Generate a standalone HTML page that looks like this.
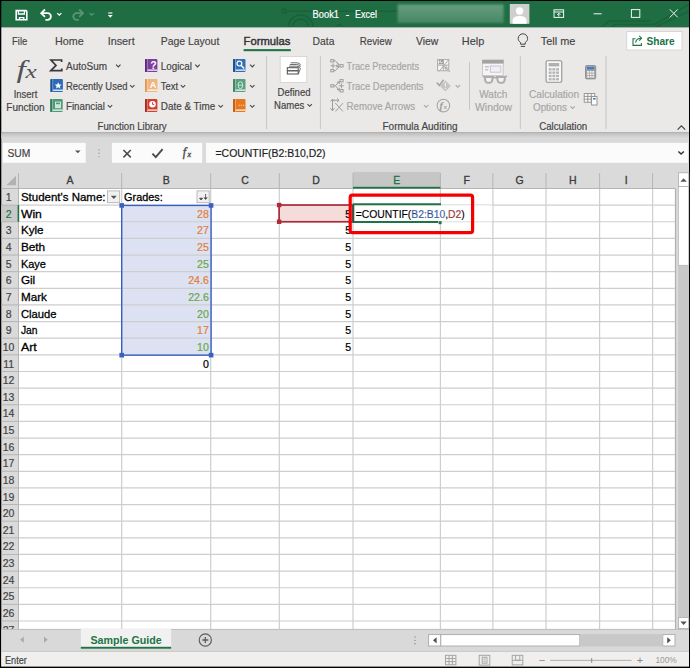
<!DOCTYPE html>
<html lang="en"><head><meta charset="utf-8"><title>Book1 - Excel</title>
<style>
html,body{margin:0;padding:0;background:#000;}
body{width:690px;height:668px;overflow:hidden;font-family:"Liberation Sans", sans-serif;}
svg{display:block;font-family:"Liberation Sans", sans-serif;}
</style></head><body>
<svg width="690" height="668" viewBox="0 0 690 668">
<rect x="0" y="0" width="690" height="668" fill="#000"/>
<rect x="1.3" y="1.0" width="687.7" height="26.4" fill="#1f6d43"/>
<g fill="none" stroke="#1a6039" stroke-width="1.5" opacity="0.9"><circle cx="284.3" cy="11.2" r="2.1"/><path d="M286.400 11.200H400"/><path d="M288.200 27.400a12.400 12.400 0 0 1 24.800 0M292.400 27.400a8.200 8.200 0 0 1 16.400 0"/><circle cx="339.500" cy="26.600" r="2"/><path d="M601 27.400l8-6.400h42M611 27.400l3.600-2.800h40l34-20M655 27.400l34-16"/></g>
<defs><filter id="bl" x="-10%" y="-20%" width="120%" height="140%"><feGaussianBlur stdDeviation="0.8"/></filter><linearGradient id="nm" x1="0" y1="0" x2="0" y2="1"><stop offset="0" stop-color="#6ba184"/><stop offset="1" stop-color="#4a8967"/></linearGradient></defs>
<rect x="397.6" y="4.4" width="106" height="18.6" fill="url(#nm)" filter="url(#bl)" opacity="0.95"/>
<rect x="509.8" y="4" width="19.6" height="19.8" fill="#cfcfcf"/>
<circle cx="519.6" cy="11" r="3.7" fill="#fff"/><path d="M512.6 23.800v-3.200q0-4.600 7-4.600t7 4.600v3.200z" fill="#fff"/>
<text x="312.6" y="17.9" font-size="10.5" fill="#fff" stroke="#fff" stroke-width="0.18" textLength="26.4" lengthAdjust="spacingAndGlyphs">Book1</text>
<text x="345.8" y="17.9" font-size="10.5" fill="#fff" stroke="#fff" stroke-width="0.18">-</text>
<text x="355" y="17.9" font-size="10.5" fill="#fff" stroke="#fff" stroke-width="0.18" textLength="21.9" lengthAdjust="spacingAndGlyphs">Excel</text>
<g fill="none" stroke="#fff" stroke-width="1.6"><path d="M16.200 10.600h9.800l.8.8v8.400h-10.600z"/><path d="M18.400 10.600v3.400h6v-3.400" stroke-width="1.3"/><path d="M19.400 19.800v-2.200h4.400v2.200" stroke-width="1.300"/></g>
<g fill="none" stroke="#fff" stroke-width="1.8"><path d="M41 13.200h6.600a3.300 3.300 0 0 1 0 6.600h-2.200"/><path d="M45 9.500l-3.800 3.700 3.800 3.700"/></g>
<path d="M57.199999999999996 13.149999999999999L59.3 15.25L61.4 13.149999999999999" fill="none" stroke="#fff" stroke-width="1.2"/>
<g fill="none" stroke="#5a9577" stroke-width="1.8"><path d="M83.200 13.200h-6.600a3.300 3.300 0 0 0 0 6.600h2.200"/><path d="M79.200 9.500l3.800 3.700-3.800 3.700"/></g>
<path d="M89.60000000000001 13.149999999999999L91.7 15.25L93.8 13.149999999999999" fill="none" stroke="#5e9a7a" stroke-width="1.2"/>
<path d="M108.200 13h4.200" stroke="#fff" stroke-width="1.100"/><path d="M107.900 15h4.800l-2.400 2.700z" fill="#fff"/>
<g fill="none" stroke="#f2f7f4" stroke-width="1"><rect x="554" y="9.800" width="9.600" height="7.600"/><path d="M554 12h9.600M558.800 16.600v-3.200M557.200 14.800l1.600-1.600 1.600 1.600"/><path d="M593.600 13.800h8"/><rect x="631.400" y="9.600" width="8.400" height="7.800"/><path d="M669.800 9.400l8 8M677.800 9.400l-8 8"/></g>
<rect x="1.3" y="27.3" width="687.7" height="105.3" fill="#ebe9e8"/>
<text x="12" y="44.7" font-size="10.5" fill="#444" stroke="#444" stroke-width="0.15" textLength="15.3" lengthAdjust="spacingAndGlyphs">File</text>
<text x="55" y="44.7" font-size="10.5" fill="#444" stroke="#444" stroke-width="0.15" textLength="28.7" lengthAdjust="spacingAndGlyphs">Home</text>
<text x="107.7" y="44.7" font-size="10.5" fill="#444" stroke="#444" stroke-width="0.15" textLength="27" lengthAdjust="spacingAndGlyphs">Insert</text>
<text x="160.7" y="44.7" font-size="10.5" fill="#444" stroke="#444" stroke-width="0.15" textLength="58.6" lengthAdjust="spacingAndGlyphs">Page Layout</text>
<text x="243.6" y="44.7" font-size="10.5" fill="#333" stroke="#333" stroke-width="0.4" textLength="46.8" lengthAdjust="spacingAndGlyphs">Formulas</text>
<text x="312.6" y="44.7" font-size="10.5" fill="#444" stroke="#444" stroke-width="0.15" textLength="21.9" lengthAdjust="spacingAndGlyphs">Data</text>
<text x="359.7" y="44.7" font-size="10.5" fill="#444" stroke="#444" stroke-width="0.15" textLength="32" lengthAdjust="spacingAndGlyphs">Review</text>
<text x="416" y="44.7" font-size="10.5" fill="#444" stroke="#444" stroke-width="0.15" textLength="22.4" lengthAdjust="spacingAndGlyphs">View</text>
<text x="461.8" y="44.7" font-size="10.5" fill="#444" stroke="#444" stroke-width="0.15" textLength="22.4" lengthAdjust="spacingAndGlyphs">Help</text>
<text x="540.8" y="44.7" font-size="10.5" fill="#444" stroke="#444" stroke-width="0.15" textLength="34.6" lengthAdjust="spacingAndGlyphs">Tell me</text>
<rect x="243.6" y="49.1" width="47.2" height="2.1" fill="#217346"/>
<g fill="none" stroke="#444" stroke-width="1"><path d="M520.6 44.2v-1.6c-1.6-1.2-2.4-2.4-2.4-4.1a4.7 4.7 0 0 1 9.4 0c0 1.7-.8 2.9-2.4 4.1v1.6z"/><path d="M520.8 46.4h4.2"/></g>
<rect x="626.8" y="31.4" width="55.2" height="18.6" fill="#fff" stroke="#d0d0d0" stroke-width="0.8"/>
<g fill="none" stroke="#217346" stroke-width="1.1"><path d="M635.4 38.8h-2.4v6.6h8.4v-2.4"/><path d="M635.6 42.6c.4-3 2.4-4.4 5.6-4.4M639.2 35.8l2.4 2.4-2.4 2.4"/></g>
<text x="646.5" y="44.5" font-size="10.5" fill="#217346" textLength="28.2" lengthAdjust="spacingAndGlyphs" font-weight="bold">Share</text>
<text x="16.6" y="78" font-size="26" fill="#525252" textLength="9.4" lengthAdjust="spacingAndGlyphs" font-style="italic" font-family='"Liberation Serif", serif'>f</text>
<text x="25.4" y="78" font-size="19.5" fill="#525252" textLength="11.2" lengthAdjust="spacingAndGlyphs" font-style="italic" font-family='"Liberation Serif", serif'>x</text>
<text x="13.7" y="97.5" font-size="10" fill="#444444" stroke="#444444" stroke-width="0.18" textLength="23.6" lengthAdjust="spacingAndGlyphs">Insert</text>
<text x="6.3" y="110.7" font-size="10" fill="#444444" stroke="#444444" stroke-width="0.18" textLength="38.3" lengthAdjust="spacingAndGlyphs">Function</text>
<path d="M61.6 62v-2h-10.6l5 5.4-5.2 5.2h11v-2.2" fill="none" stroke="#3a3a3a" stroke-width="1.7" stroke-linejoin="miter"/>
<text x="66" y="69.9" font-size="10" fill="#444444" stroke="#444444" stroke-width="0.18" textLength="41" lengthAdjust="spacingAndGlyphs">AutoSum</text>
<path d="M116.1 64.7L118.3 66.89999999999999L120.5 64.7" fill="none" stroke="#444" stroke-width="1.1"/>
<g><rect x="50.5" y="79.1" width="12.4" height="13" rx="1" fill="#2b6cb8"/><rect x="50.5" y="79.1" width="1.8" height="13" rx="0.6" fill="#1d4f8c"/><rect x="52.4" y="79.1" width="0.7" height="13" fill="#fff" opacity="0.45"/><rect x="53.1" y="89.5" width="9.8" height="1.5" fill="#fff" opacity="0.8"/></g>
<path d="M58.2 82.2l1 2.2 2.4.2-1.8 1.6.6 2.4-2.2-1.3-2.2 1.3.6-2.4-1.8-1.6 2.4-.2z" fill="#fff"/>
<text x="66" y="90.0" font-size="10" fill="#444444" stroke="#444444" stroke-width="0.18" textLength="61.4" lengthAdjust="spacingAndGlyphs">Recently Used</text>
<path d="M130.10000000000002 85.10000000000001L132.3 87.3L134.5 85.10000000000001" fill="none" stroke="#444" stroke-width="1.1"/>
<g><rect x="50.3" y="99.0" width="12.4" height="13" rx="1" fill="#4f9a76"/><rect x="50.3" y="99.0" width="1.8" height="13" rx="0.6" fill="#2f7c57"/><rect x="52.199999999999996" y="99.0" width="0.7" height="13" fill="#fff" opacity="0.45"/><rect x="52.9" y="109.4" width="9.8" height="1.5" fill="#fff" opacity="0.8"/></g>
<rect x="55" y="101.6" width="6" height="6.6" fill="#cfe6da"/><rect x="56" y="102.6" width="4" height="1.6" fill="#4f9a76"/>
<text x="66" y="110.0" font-size="10" fill="#444444" stroke="#444444" stroke-width="0.18" textLength="38.9" lengthAdjust="spacingAndGlyphs">Financial</text>
<path d="M107.8 105.10000000000001L110 107.3L112.2 105.10000000000001" fill="none" stroke="#444" stroke-width="1.1"/>
<g><rect x="145" y="59.0" width="12.4" height="13" rx="1" fill="#7b3fa0"/><rect x="145" y="59.0" width="1.8" height="13" rx="0.6" fill="#5b2a7c"/><rect x="146.9" y="59.0" width="0.7" height="13" fill="#fff" opacity="0.45"/><rect x="147.6" y="69.4" width="9.8" height="1.5" fill="#fff" opacity="0.8"/></g>
<text x="150.2" y="68.9" font-size="10.5" fill="#fff" font-weight="bold">?</text>
<text x="160.8" y="69.9" font-size="10" fill="#444444" stroke="#444444" stroke-width="0.18" textLength="31.1" lengthAdjust="spacingAndGlyphs">Logical</text>
<path d="M195.3 64.7L197.5 66.89999999999999L199.7 64.7" fill="none" stroke="#444" stroke-width="1.1"/>
<g><rect x="145" y="79.0" width="12.4" height="13" rx="1" fill="#eeb57c"/><rect x="145" y="79.0" width="1.8" height="13" rx="0.6" fill="#e0964f"/><rect x="146.9" y="79.0" width="0.7" height="13" fill="#fff" opacity="0.45"/><rect x="147.6" y="89.4" width="9.8" height="1.5" fill="#fff" opacity="0.8"/></g>
<text x="149.7" y="88.1" font-size="9.2" fill="#fff" font-weight="bold">A</text>
<text x="160.8" y="90.0" font-size="10" fill="#444444" stroke="#444444" stroke-width="0.18" textLength="17.2" lengthAdjust="spacingAndGlyphs">Text</text>
<path d="M180.8 85.10000000000001L183 87.3L185.2 85.10000000000001" fill="none" stroke="#444" stroke-width="1.1"/>
<g><rect x="145" y="99.0" width="12.4" height="13" rx="1" fill="#d23f2f"/><rect x="145" y="99.0" width="1.8" height="13" rx="0.6" fill="#a82a1e"/><rect x="146.9" y="99.0" width="0.7" height="13" fill="#fff" opacity="0.45"/><rect x="147.6" y="109.4" width="9.8" height="1.5" fill="#fff" opacity="0.8"/></g>
<circle cx="152.500" cy="104.300" r="3.300" fill="#fff"/><path d="M152.500 102.300v2.100h1.700" stroke="#d23f2f" stroke-width="1" fill="none"/>
<text x="160.8" y="110.0" font-size="10" fill="#444444" stroke="#444444" stroke-width="0.18" textLength="54.4" lengthAdjust="spacingAndGlyphs">Date &amp; Time</text>
<path d="M218.5 105.10000000000001L220.7 107.3L222.89999999999998 105.10000000000001" fill="none" stroke="#444" stroke-width="1.1"/>
<g><rect x="233.1" y="59.0" width="12.4" height="13" rx="1" fill="#2f6fb5"/><rect x="233.1" y="59.0" width="1.8" height="13" rx="0.6" fill="#1d4f8c"/><rect x="235.0" y="59.0" width="0.7" height="13" fill="#fff" opacity="0.45"/><rect x="235.7" y="69.4" width="9.8" height="1.5" fill="#fff" opacity="0.8"/></g>
<circle cx="239.400" cy="63.600" r="2.400" fill="none" stroke="#fff" stroke-width="1.200"/><path d="M241.200 65.400l3 3.200" stroke="#fff" stroke-width="1.400"/>
<path d="M250.10000000000002 64.7L252.3 66.89999999999999L254.5 64.7" fill="none" stroke="#444" stroke-width="1.1"/>
<g><rect x="233.1" y="79.0" width="12.4" height="13" rx="1" fill="#5a9f7e"/><rect x="233.1" y="79.0" width="1.8" height="13" rx="0.6" fill="#3d8563"/><rect x="235.0" y="79.0" width="0.7" height="13" fill="#fff" opacity="0.45"/><rect x="235.7" y="89.4" width="9.8" height="1.5" fill="#fff" opacity="0.8"/></g>
<ellipse cx="240.400" cy="85.200" rx="2.300" ry="3.500" fill="none" stroke="#d3eadd" stroke-width="1"/><path d="M238.200 85.200h4.400" stroke="#d3eadd" stroke-width="0.900"/>
<path d="M250.10000000000002 85.10000000000001L252.3 87.3L254.5 85.10000000000001" fill="none" stroke="#444" stroke-width="1.1"/>
<g><rect x="233.1" y="99.0" width="12.4" height="13" rx="1" fill="#e5771f"/><rect x="233.1" y="99.0" width="1.8" height="13" rx="0.6" fill="#c55e0f"/><rect x="235.0" y="99.0" width="0.7" height="13" fill="#fff" opacity="0.45"/><rect x="235.7" y="109.4" width="9.8" height="1.5" fill="#fff" opacity="0.8"/></g>
<path d="M238.6 105.4h5.6" stroke="#f6c79e" stroke-width="1.2" stroke-dasharray="1.2 1"/>
<path d="M250.10000000000002 105.10000000000001L252.3 107.3L254.5 105.10000000000001" fill="none" stroke="#444" stroke-width="1.1"/>
<text x="97.6" y="129.7" font-size="10" fill="#444444" stroke="#444444" stroke-width="0.18" textLength="69.1" lengthAdjust="spacingAndGlyphs">Function Library</text>
<line x1="266.6" y1="56" x2="266.6" y2="129" stroke="#c8c6c4" stroke-width="1"/>
<line x1="320.4" y1="56" x2="320.4" y2="129" stroke="#c8c6c4" stroke-width="1"/>
<line x1="469.5" y1="62" x2="469.5" y2="110" stroke="#c8c6c4" stroke-width="1"/>
<line x1="520.3" y1="56" x2="520.3" y2="129" stroke="#c8c6c4" stroke-width="1"/>
<line x1="606" y1="56" x2="606" y2="129" stroke="#c8c6c4" stroke-width="1"/>
<rect x="280.2" y="56.4" width="26.6" height="26" fill="#fff" stroke="#d2d0ce" stroke-width="0.8"/>
<g fill="none" stroke="#4a4a4a" stroke-width="0.8"><path d="M290.600 62.800h6.400q3 0 3.600 2.600M289.800 64.500h7q3 0 3.600 2.500M289 66.200h7.600q3 0 3.800 2.400l-2 5.400"/><rect x="287.300" y="67.700" width="10.900" height="6.300" stroke-width="1" fill="#fff"/><path d="M287.300 70.800h10.900" stroke-width="1.300"/></g>
<text x="277.6" y="95.7" font-size="10" fill="#444444" stroke="#444444" stroke-width="0.18" textLength="32.9" lengthAdjust="spacingAndGlyphs">Defined</text>
<text x="274.1" y="108.6" font-size="10" fill="#444444" stroke="#444444" stroke-width="0.18" textLength="30.1" lengthAdjust="spacingAndGlyphs">Names</text>
<path d="M307.5 104.10000000000001L309.7 106.3L311.9 104.10000000000001" fill="none" stroke="#444" stroke-width="1.1"/>
<text x="346.6" y="69.9" font-size="10" fill="#a6a6a6" stroke="#a6a6a6" stroke-width="0.18" textLength="72.4" lengthAdjust="spacingAndGlyphs">Trace Precedents</text>
<text x="346.6" y="90.0" font-size="10" fill="#a6a6a6" stroke="#a6a6a6" stroke-width="0.18" textLength="76.9" lengthAdjust="spacingAndGlyphs">Trace Dependents</text>
<text x="346.6" y="110.0" font-size="10" fill="#a6a6a6" stroke="#a6a6a6" stroke-width="0.18" textLength="68.4" lengthAdjust="spacingAndGlyphs">Remove Arrows</text>
<path d="M423.90000000000003 105.10000000000001L426.1 107.3L428.3 105.10000000000001" fill="none" stroke="#a6a6a6" stroke-width="1.1"/>
<g fill="none" stroke="#9e9e9e" stroke-width="1"><rect x="330.8" y="59.6" width="3" height="2.3"/><rect x="330.8" y="69.5" width="3" height="2.3"/><rect x="340" y="64.6" width="3.1" height="2.4"/><path d="M333.8 60.8h1.6l3.6 4M333.8 70.6h1.6l3.6-4M330.6 65.8h5M333 63.4v4.8M337 62.6l2.2 2.4-3.2.4M337 69l2.2-2.4-3.2-.4"/><rect x="330.8" y="84.7" width="3" height="2.3"/><rect x="340" y="79.6" width="3.1" height="2.3"/><rect x="340" y="89.5" width="3.1" height="2.4"/><path d="M333.8 85.8h1.6l3.8-4.2M335.4 85.8l3.8 4.4M338.8 85.8h5M341.4 83.4v4.8M337 82.4l2.4-.9-.3 2.5M337 89.4l2.4.9-.3-2.5"/><path d="M332.5 99.4v11.2M330.4 108.2l2.1 2.6 2.1-2.6M330.6 101.4l1.9-2.2 1.9 2.2M332.5 100.2h6M337 98.4l2 1.8-2 1.8M335.3 103l7.6 8.4M342.9 103.2l-7.4 8.2" stroke-width="1"/></g>
<text x="382.5" y="129.7" font-size="10" fill="#444444" stroke="#444444" stroke-width="0.18" textLength="75" lengthAdjust="spacingAndGlyphs">Formula Auditing</text>
<g fill="none" stroke="#a6a6a6" stroke-width="0.9"><rect x="437.6" y="59.6" width="11.2" height="11.2" fill="#f4f4f4"/><path d="M437.6 65.2h11.2M443.2 59.6v11.2M446 65.2v5.6M443.2 68h5.6M439 71.4l10-12M443.6 66l6.4 6" /></g>
<text x="438.4" y="64.4" font-size="5.5" fill="#8a8a8a" stroke="#8a8a8a" stroke-width="0.3" textLength="5" lengthAdjust="spacingAndGlyphs">15</text>
<path d="M436.8 82.6l2.6 2.8 4.2-5.6" fill="none" stroke="#a6a6a6" stroke-width="1.6"/><path d="M445.4 80.6l5.4 5.4-5.4 5.4-5.4-5.4z" fill="#c4c4c4"/><path d="M445.4 83v3.6M445.4 87.8v1.2" stroke="#f2f2f2" stroke-width="1.1"/>
<path d="M455.7 85.10000000000001L457.9 87.3L460.09999999999997 85.10000000000001" fill="none" stroke="#a6a6a6" stroke-width="1.1"/>
<circle cx="443.4" cy="105.6" r="6.3" fill="none" stroke="#a6a6a6" stroke-width="1.1"/>
<text x="439.6" y="108.8" font-size="10.5" fill="#999" font-weight="bold" font-style="italic" font-family='"Liberation Serif", serif'>f</text>
<text x="443.4" y="108.6" font-size="7" fill="#999" font-weight="bold" font-style="italic" font-family='"Liberation Serif", serif'>x</text>
<g fill="none" stroke="#a6a6a6" stroke-width="0.9"><rect x="482.6" y="60.2" width="20.6" height="15.4" fill="#f5f5f5" stroke="#c4c4c4"/><rect x="482.2" y="59.8" width="21.4" height="3.8" fill="#a3a3a3" stroke="none"/><path d="M485 66.8h4M485 69.8h3.2"/><rect x="490.4" y="66" width="10.4" height="6.2" stroke="#cbbfd2" fill="#f3eef5"/></g>
<g fill="#f3f3f3" stroke="#adadad" stroke-width="2"><path d="M484.8 76.9h8l-.8 4.2q-.4 1.6-2 1.6h-2.6q-1.6 0-2-1.6z"/><path d="M497 76.9h8l-.6 4.2q-.4 1.6-2 1.6h-2.6q-1.6 0-2-1.6z"/><path d="M492.8 78.2q2.100-1.400 4.200 0M484.800 77l-2-1M505 77l2-1" fill="none" stroke-width="1.6"/></g>
<text x="479.3" y="97.8" font-size="10" fill="#a6a6a6" stroke="#a6a6a6" stroke-width="0.18" textLength="28" lengthAdjust="spacingAndGlyphs">Watch</text>
<text x="475" y="111" font-size="10" fill="#a6a6a6" stroke="#a6a6a6" stroke-width="0.18" textLength="37" lengthAdjust="spacingAndGlyphs">Window</text>
<rect x="546.1" y="60.6" width="15.6" height="21.8" rx="1.8" fill="#f7f7f7" stroke="#a6a6a6" stroke-width="1.4"/><rect x="548.6" y="63" width="10.6" height="3.4" fill="#b0b0b0"/><g fill="#b4b4b4"><rect x="548.7" y="68.2" width="2.9" height="2.3"/><rect x="548.7" y="71.5" width="2.9" height="2.3"/><rect x="548.7" y="74.8" width="2.9" height="2.3"/><rect x="548.7" y="78.1" width="2.9" height="2.3"/><rect x="552.4" y="68.2" width="2.9" height="2.3"/><rect x="552.4" y="71.5" width="2.9" height="2.3"/><rect x="552.4" y="74.8" width="2.9" height="2.3"/><rect x="552.4" y="78.1" width="2.9" height="2.3"/><rect x="556.1" y="68.2" width="2.9" height="2.3"/><rect x="556.1" y="71.5" width="2.9" height="2.3"/><rect x="556.1" y="74.8" width="2.9" height="2.3"/><rect x="556.1" y="78.1" width="2.9" height="2.3"/></g>
<text x="529" y="97.8" font-size="10" fill="#a6a6a6" stroke="#a6a6a6" stroke-width="0.18" textLength="50.1" lengthAdjust="spacingAndGlyphs">Calculation</text>
<text x="533" y="111" font-size="10" fill="#a6a6a6" stroke="#a6a6a6" stroke-width="0.18" textLength="33.9" lengthAdjust="spacingAndGlyphs">Options</text>
<path d="M570.4 106.30000000000001L572.6 108.5L574.8000000000001 106.30000000000001" fill="none" stroke="#a6a6a6" stroke-width="1.1"/>
<rect x="585.5" y="65.5" width="10.2" height="13.4" rx="1.2" fill="#a2a2a2" stroke="#858585" stroke-width="0.8"/><rect x="587" y="67" width="7.2" height="2.4" fill="#3f7fd0"/><g fill="#f0f0f0"><rect x="587.1" y="71.0" width="1.9" height="1.7"/><rect x="587.1" y="73.5" width="1.9" height="1.7"/><rect x="587.1" y="76.0" width="1.9" height="1.7"/><rect x="589.7" y="71.0" width="1.9" height="1.7"/><rect x="589.7" y="73.5" width="1.9" height="1.7"/><rect x="589.7" y="76.0" width="1.9" height="1.7"/><rect x="592.3" y="71.0" width="1.9" height="1.7"/><rect x="592.3" y="73.5" width="1.9" height="1.7"/><rect x="592.3" y="76.0" width="1.9" height="1.7"/></g>
<g fill="none" stroke="#8a8a8a" stroke-width="0.9"><rect x="584.2" y="93.6" width="10.6" height="8.6" fill="#fff"/><path d="M584.2 96.4h10.6M584.2 99.2h10.6M587.8 93.6v8.6M591.2 93.6v8.6"/><rect x="591.6" y="96.6" width="5.4" height="8.4" fill="#fff"/><rect x="593" y="98" width="2.6" height="1.6" fill="#3f7fd0" stroke="none"/></g>
<text x="539.2" y="129.7" font-size="10" fill="#444444" stroke="#444444" stroke-width="0.18" textLength="48" lengthAdjust="spacingAndGlyphs">Calculation</text>
<path d="M677.6 129.6l3.8-3.8 3.8 3.8" fill="none" stroke="#444" stroke-width="1.2"/>
<rect x="1.3" y="132.6" width="687.7" height="533.8" fill="#dadada"/>
<defs><linearGradient id="sh" x1="0" y1="0" x2="0" y2="1"><stop offset="0" stop-color="#bcbcbc"/><stop offset="1" stop-color="#dadada"/></linearGradient></defs>
<rect x="1.3" y="132.6" width="687.7" height="5.5" fill="url(#sh)"/>
<rect x="2.6" y="142.6" width="83.4" height="20.5" fill="#fbfbfb" stroke="#dadada" stroke-width="0.6"/>
<text x="7.5" y="157" font-size="10.5" fill="#444444" stroke="#444444" stroke-width="0.18" textLength="22.9" lengthAdjust="spacingAndGlyphs">SUM</text>
<path d="M75 150.4h5.6l-2.8 2.9z" fill="#555"/>
<circle cx="99" cy="149.8" r="0.7" fill="#9a9a9a"/>
<circle cx="99" cy="153.2" r="0.7" fill="#9a9a9a"/>
<circle cx="99" cy="156.6" r="0.7" fill="#9a9a9a"/>
<rect x="111.7" y="142.6" width="90.8" height="20.5" fill="#fbfbfb" stroke="#dadada" stroke-width="0.6"/>
<path d="M123.4 150l7.4 7.4M130.8 150l-7.4 7.4" stroke="#4a4a4a" stroke-width="1.5" fill="none"/>
<path d="M152.4 153.6l3.4 3.6 6.8-8" stroke="#4a4a4a" stroke-width="1.9" fill="none"/>
<text x="182.8" y="156.4" font-size="12" fill="#4c4c4c" stroke="#4c4c4c" stroke-width="0.4" font-style="italic" font-family='"Liberation Serif", serif'>f</text>
<text x="187.4" y="156.8" font-size="8" fill="#4c4c4c" stroke="#4c4c4c" stroke-width="0.4" font-style="italic" font-family='"Liberation Serif", serif'>x</text>
<rect x="205.8" y="142.6" width="482.4" height="20.5" fill="#fbfbfb" stroke="#dadada" stroke-width="0.6"/>
<text x="215.5" y="157.2" font-size="10.8" fill="#222" stroke="#222" stroke-width="0.18" textLength="110" lengthAdjust="spacingAndGlyphs">=COUNTIF(B2:B10,D2)</text>
<path d="M678.4 151.4l2.7 2.7 2.7-2.7" fill="none" stroke="#333" stroke-width="1.4"/>
<rect x="18.5" y="188.5" width="656.5" height="440.5" fill="#fff"/>
<rect x="353.0" y="172.0" width="87.39999999999998" height="16.5" fill="#c6c6c6"/>
<rect x="1.3" y="205.135" width="17.2" height="16.635" fill="#c9c9c9"/>
<rect x="121.7" y="205.135" width="88.99999999999999" height="149.715" fill="#dde2f3"/>
<rect x="279.3" y="205.135" width="73.69999999999999" height="16.635" fill="#f4dcdb"/>
<g stroke="#cecece" stroke-width="1.2">
<path d="M18.5 205.13H675.0"/>
<path d="M18.5 221.77H675.0"/>
<path d="M18.5 238.41H675.0"/>
<path d="M18.5 255.04H675.0"/>
<path d="M18.5 271.68H675.0"/>
<path d="M18.5 288.31H675.0"/>
<path d="M18.5 304.94H675.0"/>
<path d="M18.5 321.58H675.0"/>
<path d="M18.5 338.22H675.0"/>
<path d="M18.5 354.85H675.0"/>
<path d="M18.5 371.49H675.0"/>
<path d="M18.5 388.12H675.0"/>
<path d="M18.5 404.75H675.0"/>
<path d="M18.5 421.39H675.0"/>
<path d="M18.5 438.03H675.0"/>
<path d="M18.5 454.66H675.0"/>
<path d="M18.5 471.30H675.0"/>
<path d="M18.5 487.93H675.0"/>
<path d="M18.5 504.57H675.0"/>
<path d="M18.5 521.20H675.0"/>
<path d="M18.5 537.84H675.0"/>
<path d="M18.5 554.47H675.0"/>
<path d="M18.5 571.11H675.0"/>
<path d="M18.5 587.74H675.0"/>
<path d="M18.5 604.38H675.0"/>
<path d="M18.5 621.01H675.0"/>
<path d="M121.7 188.5V629.0"/>
<path d="M210.7 188.5V629.0"/>
<path d="M279.3 188.5V629.0"/>
<path d="M353.0 188.5V629.0"/>
<path d="M440.4 188.5V629.0"/>
<path d="M492.9 188.5V629.0"/>
<path d="M546.0 188.5V629.0"/>
<path d="M599.6 188.5V629.0"/>
<path d="M652.6 188.5V629.0"/>
</g>
<g stroke="#b5b5b5" stroke-width="1">
<path d="M1.3 205.13H18.5"/>
<path d="M1.3 221.77H18.5"/>
<path d="M1.3 238.41H18.5"/>
<path d="M1.3 255.04H18.5"/>
<path d="M1.3 271.68H18.5"/>
<path d="M1.3 288.31H18.5"/>
<path d="M1.3 304.94H18.5"/>
<path d="M1.3 321.58H18.5"/>
<path d="M1.3 338.22H18.5"/>
<path d="M1.3 354.85H18.5"/>
<path d="M1.3 371.49H18.5"/>
<path d="M1.3 388.12H18.5"/>
<path d="M1.3 404.75H18.5"/>
<path d="M1.3 421.39H18.5"/>
<path d="M1.3 438.03H18.5"/>
<path d="M1.3 454.66H18.5"/>
<path d="M1.3 471.30H18.5"/>
<path d="M1.3 487.93H18.5"/>
<path d="M1.3 504.57H18.5"/>
<path d="M1.3 521.20H18.5"/>
<path d="M1.3 537.84H18.5"/>
<path d="M1.3 554.47H18.5"/>
<path d="M1.3 571.11H18.5"/>
<path d="M1.3 587.74H18.5"/>
<path d="M1.3 604.38H18.5"/>
<path d="M1.3 621.01H18.5"/>
<path d="M121.7 173.0V188.5"/>
<path d="M210.7 173.0V188.5"/>
<path d="M279.3 173.0V188.5"/>
<path d="M353.0 173.0V188.5"/>
<path d="M440.4 173.0V188.5"/>
<path d="M492.9 173.0V188.5"/>
<path d="M546.0 173.0V188.5"/>
<path d="M599.6 173.0V188.5"/>
<path d="M652.6 173.0V188.5"/>
<path d="M18.5 173.0V629.0M1.3 188.5H675.0"/>
</g>
<path d="M16 175.700v9.600h-9.600z" fill="#b2b2b2"/>
<text x="70.1" y="184" font-size="10.5" fill="#3a3a3a" stroke="#3a3a3a" stroke-width="0.3" text-anchor="middle">A</text>
<text x="166.2" y="184" font-size="10.5" fill="#3a3a3a" stroke="#3a3a3a" stroke-width="0.3" text-anchor="middle">B</text>
<text x="245.0" y="184" font-size="10.5" fill="#3a3a3a" stroke="#3a3a3a" stroke-width="0.3" text-anchor="middle">C</text>
<text x="316.1" y="184" font-size="10.5" fill="#3a3a3a" stroke="#3a3a3a" stroke-width="0.3" text-anchor="middle">D</text>
<text x="396.7" y="184" font-size="10.5" fill="#217346" stroke="#217346" stroke-width="0.3" text-anchor="middle">E</text>
<text x="466.6" y="184" font-size="10.5" fill="#3a3a3a" stroke="#3a3a3a" stroke-width="0.3" text-anchor="middle">F</text>
<text x="519.5" y="184" font-size="10.5" fill="#3a3a3a" stroke="#3a3a3a" stroke-width="0.3" text-anchor="middle">G</text>
<text x="572.8" y="184" font-size="10.5" fill="#3a3a3a" stroke="#3a3a3a" stroke-width="0.3" text-anchor="middle">H</text>
<text x="626.1" y="184" font-size="10.5" fill="#3a3a3a" stroke="#3a3a3a" stroke-width="0.3" text-anchor="middle">I</text>
<rect x="353.0" y="186.8" width="87.39999999999998" height="1.8" fill="#217346"/>
<text x="8.6" y="201.1" font-size="10.5" fill="#444444" stroke="#444444" stroke-width="0.18" text-anchor="middle">1</text>
<text x="8.6" y="217.7" font-size="10.5" fill="#217346" stroke="#217346" stroke-width="0.18" text-anchor="middle">2</text>
<text x="8.6" y="234.4" font-size="10.5" fill="#444444" stroke="#444444" stroke-width="0.18" text-anchor="middle">3</text>
<text x="8.6" y="251.0" font-size="10.5" fill="#444444" stroke="#444444" stroke-width="0.18" text-anchor="middle">4</text>
<text x="8.6" y="267.6" font-size="10.5" fill="#444444" stroke="#444444" stroke-width="0.18" text-anchor="middle">5</text>
<text x="8.6" y="284.3" font-size="10.5" fill="#444444" stroke="#444444" stroke-width="0.18" text-anchor="middle">6</text>
<text x="8.6" y="300.9" font-size="10.5" fill="#444444" stroke="#444444" stroke-width="0.18" text-anchor="middle">7</text>
<text x="8.6" y="317.5" font-size="10.5" fill="#444444" stroke="#444444" stroke-width="0.18" text-anchor="middle">8</text>
<text x="8.6" y="334.2" font-size="10.5" fill="#444444" stroke="#444444" stroke-width="0.18" text-anchor="middle">9</text>
<text x="8.6" y="350.8" font-size="10.5" fill="#444444" stroke="#444444" stroke-width="0.18" text-anchor="middle">10</text>
<text x="8.6" y="367.5" font-size="10.5" fill="#444444" stroke="#444444" stroke-width="0.18" text-anchor="middle">11</text>
<text x="8.6" y="384.1" font-size="10.5" fill="#444444" stroke="#444444" stroke-width="0.18" text-anchor="middle">12</text>
<text x="8.6" y="400.7" font-size="10.5" fill="#444444" stroke="#444444" stroke-width="0.18" text-anchor="middle">13</text>
<text x="8.6" y="417.4" font-size="10.5" fill="#444444" stroke="#444444" stroke-width="0.18" text-anchor="middle">14</text>
<text x="8.6" y="434.0" font-size="10.5" fill="#444444" stroke="#444444" stroke-width="0.18" text-anchor="middle">15</text>
<text x="8.6" y="450.6" font-size="10.5" fill="#444444" stroke="#444444" stroke-width="0.18" text-anchor="middle">16</text>
<text x="8.6" y="467.3" font-size="10.5" fill="#444444" stroke="#444444" stroke-width="0.18" text-anchor="middle">17</text>
<text x="8.6" y="483.9" font-size="10.5" fill="#444444" stroke="#444444" stroke-width="0.18" text-anchor="middle">18</text>
<text x="8.6" y="500.5" font-size="10.5" fill="#444444" stroke="#444444" stroke-width="0.18" text-anchor="middle">19</text>
<text x="8.6" y="517.2" font-size="10.5" fill="#444444" stroke="#444444" stroke-width="0.18" text-anchor="middle">20</text>
<text x="8.6" y="533.8" font-size="10.5" fill="#444444" stroke="#444444" stroke-width="0.18" text-anchor="middle">21</text>
<text x="8.6" y="550.4" font-size="10.5" fill="#444444" stroke="#444444" stroke-width="0.18" text-anchor="middle">22</text>
<text x="8.6" y="567.1" font-size="10.5" fill="#444444" stroke="#444444" stroke-width="0.18" text-anchor="middle">23</text>
<text x="8.6" y="583.7" font-size="10.5" fill="#444444" stroke="#444444" stroke-width="0.18" text-anchor="middle">24</text>
<text x="8.6" y="600.3" font-size="10.5" fill="#444444" stroke="#444444" stroke-width="0.18" text-anchor="middle">25</text>
<text x="8.6" y="617.0" font-size="10.5" fill="#444444" stroke="#444444" stroke-width="0.18" text-anchor="middle">26</text>
<text x="8.6" y="633.6" font-size="10.5" fill="#444444" stroke="#444444" stroke-width="0.18" text-anchor="middle">27</text>
<rect x="17.6" y="205.135" width="1.6" height="16.635" fill="#217346"/>
<text x="20.9" y="201.1" font-size="11" fill="#000" stroke="#000" stroke-width="0.28" textLength="84.6" lengthAdjust="spacingAndGlyphs">Student's Name:</text>
<text x="124.1" y="201.1" font-size="11" fill="#000" stroke="#000" stroke-width="0.28" textLength="38.6" lengthAdjust="spacingAndGlyphs">Grades:</text>
<text x="20.9" y="217.7" font-size="11" fill="#000" stroke="#000" stroke-width="0.28" textLength="21" lengthAdjust="spacingAndGlyphs">Win</text>
<text x="208.8" y="217.7" font-size="10.6" fill="#e0803f" stroke="#e0803f" stroke-width="0.22" text-anchor="end">28</text>
<text x="351.1" y="217.7" font-size="10.6" fill="#000" stroke="#000" stroke-width="0.22" text-anchor="end">5</text>
<text x="20.9" y="234.4" font-size="11" fill="#000" stroke="#000" stroke-width="0.28" textLength="22.7" lengthAdjust="spacingAndGlyphs">Kyle</text>
<text x="208.8" y="234.4" font-size="10.6" fill="#e0803f" stroke="#e0803f" stroke-width="0.22" text-anchor="end">27</text>
<text x="351.1" y="234.4" font-size="10.6" fill="#000" stroke="#000" stroke-width="0.22" text-anchor="end">5</text>
<text x="20.9" y="251.0" font-size="11" fill="#000" stroke="#000" stroke-width="0.28" textLength="24.3" lengthAdjust="spacingAndGlyphs">Beth</text>
<text x="208.8" y="251.0" font-size="10.6" fill="#e0803f" stroke="#e0803f" stroke-width="0.22" text-anchor="end">25</text>
<text x="351.1" y="251.0" font-size="10.6" fill="#000" stroke="#000" stroke-width="0.22" text-anchor="end">5</text>
<text x="20.9" y="267.6" font-size="11" fill="#000" stroke="#000" stroke-width="0.28" textLength="25" lengthAdjust="spacingAndGlyphs">Kaye</text>
<text x="208.8" y="267.6" font-size="10.6" fill="#6aa84f" stroke="#6aa84f" stroke-width="0.22" text-anchor="end">25</text>
<text x="351.1" y="267.6" font-size="10.6" fill="#000" stroke="#000" stroke-width="0.22" text-anchor="end">5</text>
<text x="20.9" y="284.3" font-size="11" fill="#000" stroke="#000" stroke-width="0.28" textLength="14.3" lengthAdjust="spacingAndGlyphs">Gil</text>
<text x="208.8" y="284.3" font-size="10.6" fill="#e0803f" stroke="#e0803f" stroke-width="0.22" text-anchor="end">24.6</text>
<text x="351.1" y="284.3" font-size="10.6" fill="#000" stroke="#000" stroke-width="0.22" text-anchor="end">5</text>
<text x="20.9" y="300.9" font-size="11" fill="#000" stroke="#000" stroke-width="0.28" textLength="26" lengthAdjust="spacingAndGlyphs">Mark</text>
<text x="208.8" y="300.9" font-size="10.6" fill="#6aa84f" stroke="#6aa84f" stroke-width="0.22" text-anchor="end">22.6</text>
<text x="351.1" y="300.9" font-size="10.6" fill="#000" stroke="#000" stroke-width="0.22" text-anchor="end">5</text>
<text x="20.9" y="317.5" font-size="11" fill="#000" stroke="#000" stroke-width="0.28" textLength="35.5" lengthAdjust="spacingAndGlyphs">Claude</text>
<text x="208.8" y="317.5" font-size="10.6" fill="#6aa84f" stroke="#6aa84f" stroke-width="0.22" text-anchor="end">20</text>
<text x="351.1" y="317.5" font-size="10.6" fill="#000" stroke="#000" stroke-width="0.22" text-anchor="end">5</text>
<text x="20.9" y="334.2" font-size="11" fill="#000" stroke="#000" stroke-width="0.28" textLength="16.6" lengthAdjust="spacingAndGlyphs">Jan</text>
<text x="208.8" y="334.2" font-size="10.6" fill="#e0803f" stroke="#e0803f" stroke-width="0.22" text-anchor="end">17</text>
<text x="351.1" y="334.2" font-size="10.6" fill="#000" stroke="#000" stroke-width="0.22" text-anchor="end">5</text>
<text x="20.9" y="350.8" font-size="11" fill="#000" stroke="#000" stroke-width="0.28" textLength="15.8" lengthAdjust="spacingAndGlyphs">Art</text>
<text x="208.8" y="350.8" font-size="10.6" fill="#6aa84f" stroke="#6aa84f" stroke-width="0.22" text-anchor="end">10</text>
<text x="351.1" y="350.8" font-size="10.6" fill="#000" stroke="#000" stroke-width="0.22" text-anchor="end">5</text>
<text x="208.8" y="367.5" font-size="10.6" fill="#000" stroke="#000" stroke-width="0.22" text-anchor="end">0</text>
<rect x="107.5" y="190.9" width="12.2" height="11.8" fill="#f1f1f1" stroke="#ababab" stroke-width="0.8"/>
<path d="M110.800 195.800h6l-3 3.100z" fill="#555"/>
<rect x="197" y="190.9" width="12.2" height="11.8" fill="#f1f1f1" stroke="#ababab" stroke-width="0.8"/>
<path d="M199.6 198.2h3l-1.5 1.8zM205.6 194v5M204 197.6l1.6 1.8 1.6-1.8" fill="#444" stroke="#444" stroke-width="0.8"/>
<rect x="121.7" y="205.44" width="89.39999999999999" height="149.72" fill="none" stroke="#3861bf" stroke-width="1.4"/>
<rect x="119.40" y="203.13" width="4.6" height="4.6" fill="#3861bf"/>
<rect x="208.80" y="203.13" width="4.6" height="4.6" fill="#3861bf"/>
<rect x="119.40" y="352.85" width="4.6" height="4.6" fill="#3861bf"/>
<rect x="208.80" y="352.85" width="4.6" height="4.6" fill="#3861bf"/>
<rect x="279.1" y="205.03" width="73.69999999999999" height="16.74" fill="none" stroke="#ab2b38" stroke-width="1.7"/>
<rect x="276.90" y="202.84" width="4.4" height="4.4" fill="#ab2b38"/>
<rect x="276.90" y="219.57" width="4.4" height="4.4" fill="#ab2b38"/>
<rect x="353.6" y="205.33499999999998" width="138.7" height="16.035" fill="#fff"/>
<path d="M352.8 204.23H441.0M352.8 221.97H438.0" stroke="#217346" stroke-width="2" fill="none"/>
<path d="M353.4 204.73V222.77" stroke="#2a5a40" stroke-width="1.8" fill="none"/>
<rect x="438.59999999999997" y="221.17" width="3" height="3" fill="#217346"/>
<text x="355.8" y="217.8" font-size="11" fill="#000" stroke="#000" stroke-width="0.15" textLength="109" lengthAdjust="spacingAndGlyphs">=COUNTIF(<tspan fill="#4a78c8">B2:B10</tspan>,<tspan fill="#c0504d">D2</tspan>)</text>
<rect x="350.2" y="195.2" width="122.4" height="37.4" rx="2.2" fill="none" stroke="#f40000" stroke-width="3.2"/>
<rect x="675.0" y="172.0" width="14.0" height="457.0" fill="#dadada"/>
<line x1="675.5" y1="188.5" x2="675.5" y2="629.0" stroke="#b0b0b0" stroke-width="1.2"/>
<rect x="678.2" y="172.6" width="10.8" height="456" fill="#c8c8c8"/>
<rect x="678.4" y="186.6" width="10.4" height="78.6" fill="#fff" stroke="#adadad" stroke-width="0.6"/>
<rect x="678.4" y="172.8" width="10.4" height="13.6" fill="#fff" stroke="#adadad" stroke-width="0.8"/>
<rect x="678.4" y="617.4" width="10.4" height="11.2" fill="#fff" stroke="#adadad" stroke-width="0.8"/>
<path d="M680.4 181.8h6.4l-3.2-3.6z" fill="#555"/>
<path d="M680.4 621.4h6.4l-3.2 3.6z" fill="#555"/>
<rect x="1.3" y="629.0" width="687.7" height="22.399999999999977" fill="#d9d9d9"/>
<line x1="1.3" y1="629.4" x2="689.0" y2="629.4" stroke="#bdbdbd" stroke-width="1"/>
<path d="M23.8 636.6v6.2l-3.600-3.100zM44 636.600v6.200l3.600-3.100z" fill="#a9a9a9"/>
<rect x="80.8" y="628.8" width="90.4" height="19.6" fill="#f1f1f1"/>
<rect x="80.8" y="646.8" width="90.4" height="1.9" fill="#217346"/>
<text x="90.5" y="643.9" font-size="10.5" fill="#217346" textLength="71.2" lengthAdjust="spacingAndGlyphs" font-weight="bold">Sample Guide</text>
<circle cx="205.3" cy="640" r="6.1" fill="none" stroke="#5c5c5c" stroke-width="1.15"/><path d="M202.300 640h6M205.300 637v6" stroke="#5c5c5c" stroke-width="1.3"/>
<circle cx="415" cy="637" r="0.7" fill="#8a8a8a"/>
<circle cx="415" cy="640.4" r="0.7" fill="#8a8a8a"/>
<circle cx="415" cy="643.8" r="0.7" fill="#8a8a8a"/>
<rect x="428.6" y="634.6" width="12.2" height="11.4" fill="#fff" stroke="#a9a9a9" stroke-width="0.9"/>
<rect x="662.8" y="634.6" width="12.2" height="11.4" fill="#fff" stroke="#a9a9a9" stroke-width="0.9"/>
<path d="M436.6 637.2v6.2l-3.6-3.1zM667.2 637.2v6.2l3.600-3.100z" fill="#505050"/>
<rect x="440.8" y="634.6" width="139" height="11.4" fill="#fff" stroke="#a9a9a9" stroke-width="0.9"/>
<rect x="580.2" y="634.2" width="82.2" height="12.2" fill="#c8c8c8"/>
<rect x="1.3" y="651.4" width="687.7" height="15.0" fill="#f0efee"/>
<line x1="1.3" y1="651.4" x2="689.0" y2="651.4" stroke="#c8c8c8" stroke-width="1"/>
<text x="5" y="663.5" font-size="10" fill="#444444" stroke="#444444" stroke-width="0.18" textLength="21.8" lengthAdjust="spacingAndGlyphs">Enter</text>
<g fill="none" stroke="#a2a2a2" stroke-width="0.95"><rect x="445.500" y="655.300" width="10.400" height="9.500"/><path d="M445.500 658.500h10.400M445.500 661.600h10.400M449 655.300v9.500M452.400 655.300v9.500"/><rect x="479.200" y="655.300" width="10.600" height="9.800"/><rect x="482.200" y="657.200" width="4.800" height="6"/><path d="M483.400 659h2.400M483.400 661.200h2.400"/><rect x="512.200" y="655.300" width="10.600" height="9.600"/><path d="M515.600 655.300v5h4.200v-5M512.200 660.300h10.600"/></g>
<text x="538.8" y="663.6" font-size="11" fill="#888">−</text>
<line x1="550" y1="660.4" x2="631.6" y2="660.4" stroke="#a8a8a8" stroke-width="0.9"/>
<line x1="591.6" y1="658.2" x2="591.6" y2="662.8" stroke="#999" stroke-width="1.3"/>
<text x="636.8" y="663.9" font-size="11" fill="#888">+</text>
<text x="655.4" y="663.2" font-size="9.6" fill="#999" textLength="21.4" lengthAdjust="spacingAndGlyphs">100%</text>
</svg>
</body></html>
